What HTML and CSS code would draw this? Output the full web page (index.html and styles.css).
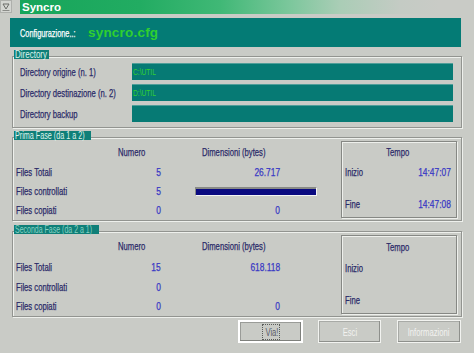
FILE: index.html
```html
<!DOCTYPE html>
<html lang="it">
<head>
<meta charset="utf-8">
<title>Syncro</title>
<link rel="stylesheet" href="styles.css">
</head>
<body>
<div class="window">
  <div class="titlebar">
    <span class="sysicon">
      <svg width="12" height="13" viewBox="0 0 12 13"><rect x="0.5" y="0.5" width="11" height="12" fill="#d4d6d2" stroke="#aeb0ac"/><path d="M3 4 L9 4 L6 9 Z" fill="none" stroke="#6a6c68" stroke-width="1"/><path d="M2.5 10.5 H9.5" stroke="#8a8c88"/></svg>
    </span>
    <div class="caption">Syncro</div>
  </div>

  <div class="config">
    <span class="config-label"><span class="t">Configurazione..:</span></span>
    <span class="config-file">syncro.cfg</span>
  </div>

  <section class="group">
    <div class="legend"><span class="t">Directory</span></div>
    <div class="box dir-box">
      <div class="dir-row"><span class="lbl"><span class="t">Directory origine (n. 1)</span></span><span class="field"><span class="t">C:\UTIL</span></span></div>
      <div class="dir-row"><span class="lbl"><span class="t">Directory destinazione (n. 2)</span></span><span class="field"><span class="t">D:\UTIL</span></span></div>
      <div class="dir-row"><span class="lbl"><span class="t">Directory backup</span></span><span class="field"></span></div>
    </div>
  </section>

  <section class="group group-phase1">
    <div class="legend legend-wide"><span class="t">Prima Fase (da 1 a 2)</span></div>
    <div class="box phase-box phase1">
      <div class="grid">
        <div></div><div class="hdr-num"><span class="t">Numero</span></div><div></div><div class="hdr-dim"><span class="t">Dimensioni (bytes)</span></div>
        <div class="lbl"><span class="t">Files Totali</span></div><div class="num"><span class="t tr">5</span></div><div></div><div class="dim"><span class="t tr">26.717</span></div>
        <div class="lbl"><span class="t">Files controllati</span></div><div class="num"><span class="t tr">5</span></div><div></div><div class="dim"><div class="progress"><div class="progress-fill"></div></div></div>
        <div class="lbl"><span class="t">Files copiati</span></div><div class="num"><span class="t tr">0</span></div><div></div><div class="dim"><span class="t tr">0</span></div>
      </div>
      <div class="tempo">
        <div class="tempo-title"><span class="t tc">Tempo</span></div>
        <div class="tempo-row tempo-start"><span class="lbl"><span class="t">Inizio</span></span><span class="num"><span class="t tr">14:47:07</span></span></div>
        <div class="tempo-row tempo-end"><span class="lbl"><span class="t">Fine</span></span><span class="num"><span class="t tr">14:47:08</span></span></div>
      </div>
    </div>
  </section>

  <section class="group group-phase2">
    <div class="legend legend-wide legend-faded"><span class="t">Seconda Fase (da 2 a 1)</span></div>
    <div class="box phase-box phase2">
      <div class="grid">
        <div></div><div class="hdr-num"><span class="t">Numero</span></div><div></div><div class="hdr-dim"><span class="t">Dimensioni (bytes)</span></div>
        <div class="lbl"><span class="t">Files Totali</span></div><div class="num"><span class="t tr">15</span></div><div></div><div class="dim"><span class="t tr">618.118</span></div>
        <div class="lbl"><span class="t">Files controllati</span></div><div class="num"><span class="t tr">0</span></div><div></div><div class="dim"></div>
        <div class="lbl"><span class="t">Files copiati</span></div><div class="num"><span class="t tr">0</span></div><div></div><div class="dim"><span class="t tr">0</span></div>
      </div>
      <div class="tempo">
        <div class="tempo-title"><span class="t tc">Tempo</span></div>
        <div class="tempo-row tempo-start"><span class="lbl"><span class="t">Inizio</span></span><span class="num"></span></div>
        <div class="tempo-row tempo-end"><span class="lbl"><span class="t">Fine</span></span><span class="num"></span></div>
      </div>
    </div>
  </section>

  <div class="buttons">
    <button class="btn btn-default"><span class="focus"><span class="t tc">Via!</span></span></button>
    <button class="btn btn-esci"><span class="t tc">Esci</span></button>
    <button class="btn btn-info"><span class="t tc">Informazioni</span></button>
  </div>
</div>
</body>
</html>
```

FILE: styles.css
```css
html, body {
  margin: 0;
  padding: 0;
}
body {
  width: 474px;
  height: 353px;
  overflow: hidden;
  background: #c9cbc6;
  font-family: "Liberation Sans", Arial, sans-serif;
  font-size: 10.5px;
  color: #2a2a68;
}
.window {
  display: flex;
  flex-direction: column;
  width: 474px;
  height: 353px;
}

/* condensed text: the reference uses a narrow UI face */
.t {
  display: inline-block;
  white-space: nowrap;
  transform: scaleX(0.73);
  transform-origin: 0 50%;
  -webkit-text-stroke: 0.25px currentColor;
}
.tr { transform-origin: 100% 50%; }
.tc { transform-origin: 50% 50%; }

/* title bar */
.titlebar {
  display: flex;
  height: 14px;
}
.sysicon {
  display: block;
  width: 12px;
  height: 13px;
  margin-right: 8px;
}
.sysicon svg { display: block; }
.caption {
  flex: 1;
  height: 14px;
  padding-left: 2px;
  background: linear-gradient(to right, #16a55a 0px, #22ac62 120px, #40b876 200px, #7cc79c 270px, #aacdb6 320px, #c4cbc4 380px, #c9cbc6 420px);
  color: #ffffff;
  font-weight: bold;
  font-size: 11.5px;
  line-height: 14px;
}

/* configuration bar */
.config {
  display: flex;
  align-items: center;
  width: 451px;
  height: 29px;
  margin: 4px 0 0 10px;
  background: #047b75;
}
.config-label {
  color: #ffffff;
  margin-left: 10px;
  width: 68px;
  font-size: 10.5px;
}
.config-label .t { transform: scaleX(0.7); }
.config-file {
  color: #2fd02f;
  font-weight: bold;
  font-size: 13.5px;
  letter-spacing: 0.2px;
}

/* groups */
.group {
  margin-left: 12px;
  width: 450px;
  margin-top: 3px;
}
.group-phase2 { margin-top: 4px; }
.legend {
  position: relative;
  z-index: 1;
  box-sizing: border-box;
  display: block;
  width: 35px;
  height: 9px;
  margin-left: 2px;
  padding-left: 1px;
  background: #0f7f78;
  color: #dff3ec;
  font-size: 10px;
  line-height: 9px;
}
.legend .t { transform: scaleX(0.8); -webkit-text-stroke: 0; }
.group-phase1 .legend { width: 77px; }
.group-phase1 .legend .t { transform: scaleX(0.72); }
.group-phase2 .legend { width: 85px; }
.group-phase2 .legend .t { transform: scaleX(0.7); }
.legend-faded { color: #86d2c2; }
.box {
  box-sizing: border-box;
  margin-top: -3px;
  border: 1px solid #929490;
  box-shadow: inset 1px 1px 0 #eef0ec, 1px 1px 0 #eef0ec;
}

/* directory group */
.dir-box {
  height: 72px;
  padding: 6px 8px 4px 7px;
  display: flex;
  flex-direction: column;
  gap: 4px;
}
.dir-row {
  display: flex;
  align-items: center;
  height: 17px;
}
.dir-row .lbl {
  width: 112px;
  flex: none;
}
.field {
  flex: 1;
  height: 17px;
  box-sizing: border-box;
  padding-left: 1px;
  background: #067a74;
  border-top: 1px solid #4f9e99;
  color: #2fd02f;
  font-size: 9.5px;
  line-height: 15px;
}
.field .t { transform: scaleX(0.7); -webkit-text-stroke: 0; }

/* phase groups */
.phase-box {
  display: flex;
  align-items: flex-start;
}
.phase1 { height: 84px; }
.phase2 { height: 86px; }
.grid {
  display: grid;
  grid-template-columns: 100px 46px 33px 122px;
  margin-left: 3px;
  align-items: center;
}
.phase1 .grid {
  margin-top: 4px;
  grid-template-rows: 20px 19px 19px 19px;
}
.phase2 .grid {
  margin-top: 3px;
  grid-template-rows: 22px 20px 19px 19px;
}
.hdr-num { padding-left: 2px; }
.hdr-dim { padding-left: 7px; }
.num {
  color: #3838c4;
  text-align: right;
  padding-right: 1px;
}
.num .t, .dim .t { transform: scaleX(0.8); }
.dim {
  color: #3838c4;
  text-align: right;
  padding-right: 37px;
}
.progress {
  box-sizing: border-box;
  width: 122px;
  height: 9px;
  margin-top: 2px;
  border: 1px solid;
  border-color: #888a86 #f4f4f4 #f4f4f4 #888a86;
  background: #888a86;
  padding-top: 1px;
}
.progress-fill {
  height: 6px;
  background: #0a0a80;
}

/* tempo box */
.tempo {
  box-sizing: border-box;
  width: 116px;
  margin-left: auto;
  margin-right: 4px;
  margin-top: 3px;
  border: 1px solid #868884;
  box-shadow: inset 1px 1px 0 #eef0ec, 1px 1px 0 #eef0ec;
  display: flex;
  flex-direction: column;
  padding: 3px 5px 0 3px;
}
.phase1 .tempo { height: 77px; }
.phase2 .tempo { height: 79px; padding-top: 4px; }
.tempo-title {
  height: 14px;
  line-height: 14px;
  text-align: center;
}
.tempo-row {
  display: flex;
  justify-content: space-between;
  align-items: center;
  height: 20px;
}
.tempo-start { margin-top: 3px; }
.phase2 .tempo-start { margin-top: 4px; }
.tempo-end { margin-top: 12px; }
.tempo-row .num { padding-right: 0; }

/* buttons */
.buttons {
  display: flex;
  justify-content: flex-end;
  margin-top: 3px;
  padding-right: 13px;
  gap: 15px;
}
.btn {
  box-sizing: border-box;
  height: 23px;
  margin: 0;
  padding: 0;
  background: #c9cbc6;
  font-family: "Liberation Sans", Arial, sans-serif;
  font-size: 10.5px;
  color: #f2f2f0;
  border: 1px solid #f2f3f0;
  box-shadow: inset -1px -1px 0 #8e908c, inset 1px 1px 0 #a8aaa6;
}
.btn .t { -webkit-text-stroke: 0; }
.btn-default {
  width: 65px;
  border: 2px solid #ffffff;
  color: #5a5c6a;
  box-shadow: inset -1px -1px 0 #7e807c, inset 1px 1px 0 #9a9c98;
}
.focus {
  display: inline-block;
  width: 16px;
  padding: 2px 0;
  border: 1px dotted #5a5c5a;
  line-height: 10px;
  text-align: center;
}
.btn-esci { width: 63px; }
.btn-info { width: 64px; margin-left: 1px; }
```
